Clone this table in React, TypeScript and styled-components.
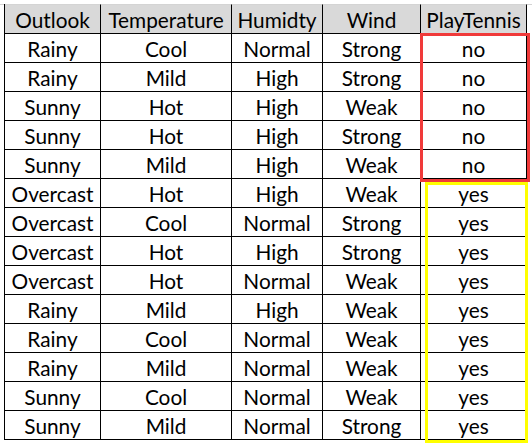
import React from "react";
import styled, { createGlobalStyle } from "styled-components";

const Global = createGlobalStyle`
  html, body { margin: 0; padding: 0; background: #ffffff; }
  body { font-family: Lato, "Open Sans", sans-serif; }
`;

const Sheet = styled.div`
  position: relative;
  width: 532px;
  height: 445px;
  padding-top: 4px;
  box-sizing: border-box;
  background:
    linear-gradient(#d4d4d4, #d4d4d4) 0 4px / 100% 1px no-repeat,
    #ffffff;
`;

const Grid = styled.div`
  margin-left: 4px;
  display: grid;
  grid-template-columns: 96px 131px 91px 98px 106px;
  width: 523px;
  border-left: 1px solid #000;
  box-sizing: border-box;
`;

const Cell = styled.div<{ $head?: boolean }>`
  box-sizing: border-box;
  height: ${(p) => (p.$head ? "30px" : "29px")};
  border-right: 1px solid #000;
  border-bottom: 1px solid #000;
  border-top: ${(p) => (p.$head ? "1px solid #d4d4d4" : "0")};
  background: ${(p) => (p.$head ? "#d9d9d9" : "#ffffff")};
  display: flex;
  align-items: center;
  justify-content: center;
  font-size: 20.8px;
  color: #000;
  white-space: nowrap;
  line-height: 1;
  padding-top: 2px;
`;

const Box = styled.div<{ $color: string }>`
  position: absolute;
  box-sizing: border-box;
  border: 3px solid ${(p) => p.$color};
  pointer-events: none;
`;

const headers = ["Outlook", "Temperature", "Humidty", "Wind", "PlayTennis"];
const rows: string[][] = [
  ["Rainy", "Cool", "Normal", "Strong", "no"],
  ["Rainy", "Mild", "High", "Strong", "no"],
  ["Sunny", "Hot", "High", "Weak", "no"],
  ["Sunny", "Hot", "High", "Strong", "no"],
  ["Sunny", "Mild", "High", "Weak", "no"],
  ["Overcast", "Hot", "High", "Weak", "yes"],
  ["Overcast", "Cool", "Normal", "Strong", "yes"],
  ["Overcast", "Hot", "High", "Strong", "yes"],
  ["Overcast", "Hot", "Normal", "Weak", "yes"],
  ["Rainy", "Mild", "High", "Weak", "yes"],
  ["Rainy", "Cool", "Normal", "Weak", "yes"],
  ["Rainy", "Mild", "Normal", "Weak", "yes"],
  ["Sunny", "Cool", "Normal", "Weak", "yes"],
  ["Sunny", "Mild", "Normal", "Strong", "yes"],
];

export default function App() {
  return (
    <>
      <Global />
      <Sheet>
        <Grid>
          {headers.map((h) => (
            <Cell key={h} $head>
              {h}
            </Cell>
          ))}
          {rows.map((r, i) =>
            r.map((c, j) => <Cell key={`${i}-${j}`}>{c}</Cell>)
          )}
        </Grid>
        <Box $color="#f03a3a" style={{ left: 420, top: 33, width: 110, height: 149 }} />
        <Box $color="#ffff00" style={{ left: 425, top: 182, width: 103, height: 261 }} />
      </Sheet>
    </>
  );
}
